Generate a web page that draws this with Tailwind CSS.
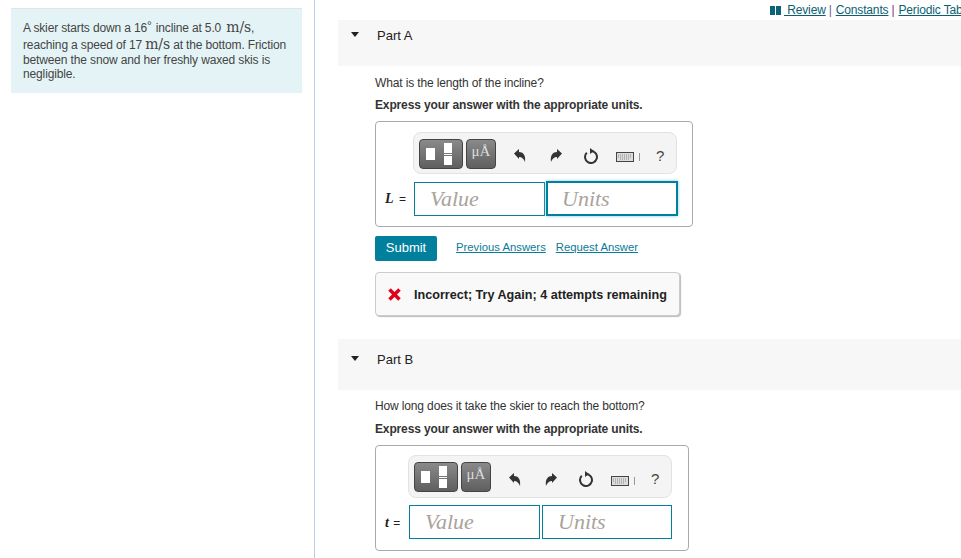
<!DOCTYPE html>
<html lang="en">
<head>
    <meta charset="UTF-8">
    <title>Part A / Part B</title>
    <script src="https://cdn.jsdelivr.net/npm/@tailwindcss/browser@4"></script>
</head>
<body class="bg-white overflow-hidden font-['Liberation_Sans',Arial,sans-serif] text-[#333]">
    <div class="flex w-[961px] h-[558px] overflow-hidden">
        <!-- Problem text -->
        <div class="w-[315px] h-[558px] shrink-0 border-r border-[#b9cfe3] pt-2 pl-[11px]">
            <div class="w-[291px] h-[85px] bg-[#e4f4f6] border-t border-[#dde6e8] pl-3 pt-[11px] text-[12px] tracking-[-0.14px] leading-[15px] text-[#444]">
                <p class="h-[16px] whitespace-nowrap">A skier starts down a 16<span class="relative -top-[2px] text-[12px] leading-none">°</span><span class="ml-[4px]">incline at 5.0 </span><span class="ml-[2px] font-['DejaVu_Serif',serif] text-[14px] leading-none">m/s</span>,</p>
                <p class="h-[16px] mt-[1px] whitespace-nowrap">reaching a speed of 17 <span class="font-['DejaVu_Serif',serif] text-[14px] leading-none">m/s</span> at the bottom. Friction</p>
                <p class="h-[14px] whitespace-nowrap">between the snow and her freshly waxed skis is</p>
                <p>negligible.</p>
            </div>
        </div>

        <div class="flex-1 min-w-0 pl-[23px]">
            <!-- Top links -->
            <div class="h-5 overflow-hidden flex items-center text-[12px] tracking-[-0.14px] whitespace-nowrap pl-[432px] text-[#6a5a9a]">
                <svg class="w-[11px] h-[9px] shrink-0" viewBox="0 0 11 9"><path d="M0 0h5v9H0zM6 0h5v9H6z" fill="#0b6378"/></svg>
                <a class="underline text-[#0b5f73] ml-[3px]">&nbsp;Review</a><span class="ml-[3px] mr-[4px]">|</span><a class="underline text-[#0b5f73]">Constants</a><span class="ml-[3px] mr-[4px] text-[#8a2a7a]">|</span><a class="underline text-[#0b5f73]">Periodic Table</a>
            </div>

            <!-- Part A -->
            <div class="h-[46px] bg-[#f7f7f7] flex items-start pt-[8px] text-[13px] text-[#222] leading-4">
                <span class="w-0 h-0 mt-[4px] ml-[13px] border-x-[4px] border-x-transparent border-t-[5px] border-t-[#222]"></span>
                <span class="ml-[18px]">Part A</span>
            </div>
            <div class="pl-[37px]">
                <p class="mt-[10px] text-[12px] tracking-[-0.14px] leading-[14px]">What is the length of the incline?</p>
                <p class="mt-2 text-[12px] tracking-[-0.14px] leading-[14px] font-bold">Express your answer with the appropriate units.</p>
                <div class="mt-[9px] w-[318px] h-[106px] border border-[#aaa] rounded-[4px] pl-[37px] pt-[10px]">
                    <div class="w-[264px] h-[42px] bg-[#f4f4f4] border border-[#e2e2e2] rounded-lg flex items-center pl-[5px] pt-[1px]">
                        <div class="w-[44px] h-[30px] rounded-[4px] border border-[#444] bg-gradient-to-b from-[#8a8a8a] to-[#5f5f5f] flex items-center pl-[6px] gap-[9px]">
                            <span class="w-[9px] h-[12px] bg-white"></span>
                            <span class="flex flex-col gap-[1px]"><span class="w-2 h-[10px] bg-white"></span><span class="w-2 h-[1px] bg-white"></span><span class="w-2 h-[9px] bg-white"></span></span>
                        </div>
                        <div class="ml-[3px] w-[30px] h-[30px] rounded-[4px] border border-[#444] bg-gradient-to-b from-[#8a8a8a] to-[#5f5f5f] text-[#ddd] text-[15px] leading-none text-center whitespace-nowrap font-['Liberation_Serif',serif] pt-[4px]">μÅ</div>
                        <svg class="ml-[18px] mt-[5px] w-[12px] h-[14px]" viewBox="0 0 12 14"><path d="M0 4.500 5 0v3c4 0 7 3 6 10-1-3-3-5-6-5v2z" fill="#333"/></svg>
                        <svg class="ml-[24px] mt-[5px] w-[12px] h-[14px]" viewBox="0 0 12 14"><path d="M12 4.500 7 0v3c-4 0-7 3-6 10 1-3 3-5 6-5v2z" fill="#333"/></svg>
                        <svg class="ml-[21px] mt-[3px] w-[16px] h-[17px]" viewBox="0 0 16 17"><path d="M3.800 5.700A6 6 0 1 0 8 4" fill="none" stroke="#333" stroke-width="2"/><path d="M7 1v6l4-3z" fill="#333"/></svg>
                        <svg class="ml-[17px] mt-[7px] w-[18px] h-[10px]" viewBox="0 0 18 10"><rect x=".5" y=".5" width="17" height="9" fill="#ddd" stroke="#444"/><path d="M2 3h14M2 5h14M4 7h10" stroke="#888" stroke-dasharray="1 1"/></svg>
                        <span class="ml-[5px] mt-[7px] w-px h-2 bg-[#999]"></span>
                        <span class="ml-[16px] mt-[5px] text-[15px] text-[#444]">?</span>
                    </div>
                    <div class="flex items-center mt-[7px] -ml-[28px]">
                        <span class="w-[28px] text-[12px] text-[#222] whitespace-nowrap"><b class="font-['Liberation_Serif',serif] text-[14px] mr-[2px]"><i>L</i></b> =</span>
                        <div class="ml-[1px] w-[131px] h-[34px] border border-[#00809d] pl-[15px] text-[22px] leading-[31px] italic text-[#a8a39c] font-['Liberation_Serif',serif]">Value</div>
                        <div class="ml-[1px] w-[132px] h-[35px] border-2 border-[#00809d] shadow-[0_0_3px_#7fc4d4] pl-[14px] text-[22px] leading-[31px] italic text-[#a8a39c] font-['Liberation_Serif',serif]">Units</div>
                    </div>
                </div>
                <div class="mt-[9px] flex items-center">
                    <span class="w-[62px] h-[25px] bg-[#00809d] rounded-[2px] text-white text-[13px] leading-[23px] text-center">Submit</span>
                    <a class="ml-[19px] pb-[2px] text-[11.3px] text-[#0b7b98] underline">Previous Answers</a>
                    <a class="ml-[10px] pb-[2px] text-[11.3px] text-[#0b7b98] underline">Request Answer</a>
                </div>
                <div class="mt-[11px] w-[305px] h-[44px] bg-[#f9f9f9] border border-[#ccc] rounded-[4px] shadow-[1px_1px_1px_#bbb] flex items-center pl-[12px] pt-[1px] text-[#222]">
                    <svg class="w-[13px] h-[13px]" viewBox="0 0 13 13"><path d="M1.500 1.500 11.500 11.500M11.500 1.500 1.500 11.500" stroke="#e2001a" stroke-width="3.500"/></svg>
                    <span class="ml-[13px] pt-[1px] whitespace-nowrap font-bold text-[12.6px]">Incorrect; Try Again; 4 attempts remaining</span>
                </div>
            </div>

            <!-- Part B -->
            <div class="mt-[23px] h-[51px] bg-[#f7f7f7] flex items-start pt-[13px] text-[13px] text-[#222] leading-4">
                <span class="w-0 h-0 mt-[4px] ml-[13px] border-x-[4px] border-x-transparent border-t-[5px] border-t-[#222]"></span>
                <span class="ml-[18px]">Part B</span>
            </div>
            <div class="pl-[37px]">
                <p class="mt-[9px] text-[12px] tracking-[-0.14px] leading-[14px]">How long does it take the skier to reach the bottom?</p>
                <p class="mt-[9px] text-[12px] tracking-[-0.14px] leading-[14px] font-bold">Express your answer with the appropriate units.</p>
                <div class="mt-[9px] w-[314px] h-[106px] border border-[#aaa] rounded-[4px] pl-[32px] pt-[9px]">
                    <div class="w-[264px] h-[43px] bg-[#f4f4f4] border border-[#e2e2e2] rounded-lg flex items-center pl-[5px] pt-[1px]">
                        <div class="w-[44px] h-[30px] rounded-[4px] border border-[#444] bg-gradient-to-b from-[#8a8a8a] to-[#5f5f5f] flex items-center pl-[6px] gap-[9px]">
                            <span class="w-[9px] h-[12px] bg-white"></span>
                            <span class="flex flex-col gap-[1px]"><span class="w-2 h-[10px] bg-white"></span><span class="w-2 h-[1px] bg-white"></span><span class="w-2 h-[9px] bg-white"></span></span>
                        </div>
                        <div class="ml-[3px] w-[30px] h-[30px] rounded-[4px] border border-[#444] bg-gradient-to-b from-[#8a8a8a] to-[#5f5f5f] text-[#ddd] text-[15px] leading-none text-center whitespace-nowrap font-['Liberation_Serif',serif] pt-[4px]">μÅ</div>
                        <svg class="ml-[18px] mt-[5px] w-[12px] h-[14px]" viewBox="0 0 12 14"><path d="M0 4.500 5 0v3c4 0 7 3 6 10-1-3-3-5-6-5v2z" fill="#333"/></svg>
                        <svg class="ml-[24px] mt-[5px] w-[12px] h-[14px]" viewBox="0 0 12 14"><path d="M12 4.500 7 0v3c-4 0-7 3-6 10 1-3 3-5 6-5v2z" fill="#333"/></svg>
                        <svg class="ml-[21px] mt-[3px] w-[16px] h-[17px]" viewBox="0 0 16 17"><path d="M3.800 5.700A6 6 0 1 0 8 4" fill="none" stroke="#333" stroke-width="2"/><path d="M7 1v6l4-3z" fill="#333"/></svg>
                        <svg class="ml-[17px] mt-[7px] w-[18px] h-[10px]" viewBox="0 0 18 10"><rect x=".5" y=".5" width="17" height="9" fill="#ddd" stroke="#444"/><path d="M2 3h14M2 5h14M4 7h10" stroke="#888" stroke-dasharray="1 1"/></svg>
                        <span class="ml-[5px] mt-[7px] w-px h-2 bg-[#999]"></span>
                        <span class="ml-[16px] mt-[5px] text-[15px] text-[#444]">?</span>
                    </div>
                    <div class="flex items-center mt-[7px] -ml-[23px]">
                        <span class="w-[24px] text-[12px] text-[#222] whitespace-nowrap"><b class="font-['Liberation_Serif',serif] text-[14px] mr-[1px]"><i>t</i></b> =</span>
                        <div class="w-[131px] h-[34px] border border-[#00809d] pl-[15px] text-[22px] leading-[31px] italic text-[#a8a39c] font-['Liberation_Serif',serif]">Value</div>
                        <div class="ml-[2px] w-[130px] h-[34px] border border-[#00809d] pl-[15px] text-[22px] leading-[31px] italic text-[#a8a39c] font-['Liberation_Serif',serif]">Units</div>
                    </div>
                </div>
            </div>
        </div>
    </div>
</body>
</html>
